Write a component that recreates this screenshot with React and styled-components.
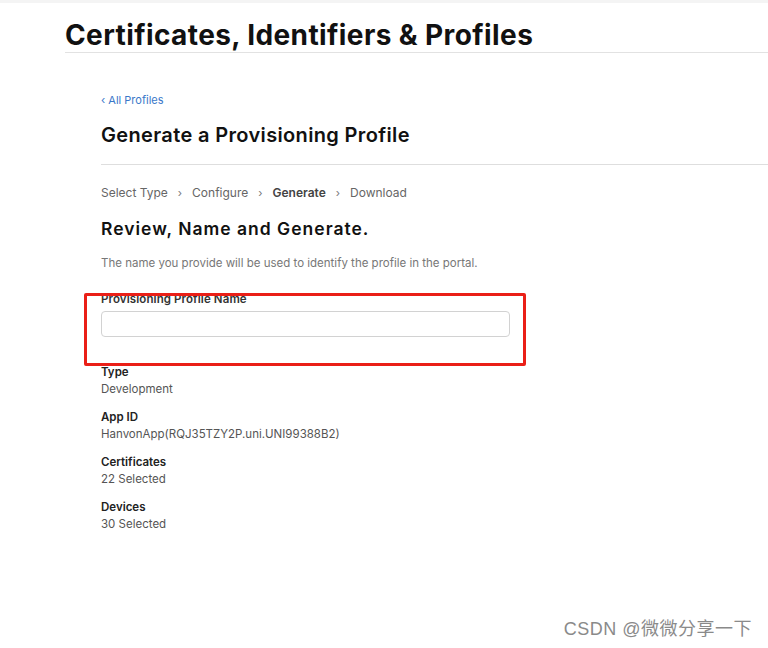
import React from "react";
import styled, { createGlobalStyle } from "styled-components";

const Global = createGlobalStyle`
  html, body { margin: 0; padding: 0; background: #fff; }
  body { font-family: Inter, "Noto Sans", "Liberation Sans", sans-serif; color: #1d1d1f; }
`;

const Page = styled.div`
  position: relative;
  width: 768px;
  height: 648px;
  overflow: hidden;
  background: #fff;
`;

const TopStrip = styled.div`
  height: 3px;
  background: #f4f4f4;
`;

const Header = styled.header`
  margin-left: 65px;
  padding-top: 16px;
  border-bottom: 1px solid #e2e2e2;
`;

const SiteTitle = styled.h1`
  margin: 0;
  font-size: 28px;
  line-height: 32px;
  font-weight: 700;
  letter-spacing: 0.4px;
  color: #111;
  padding-bottom: 1px;
`;

const Main = styled.main`
  margin-left: 101px;
  padding-top: 40px;
`;

const BackLink = styled.a`
  display: block;
  font-size: 11px;
  line-height: 14px;
  color: #3a78c9;
  text-decoration: none;
`;

const PageTitle = styled.h2`
  margin: 15px 0 0;
  font-size: 20px;
  line-height: 26px;
  font-weight: 600;
  letter-spacing: 0.35px;
  color: #111;
  padding-bottom: 16px;
  border-bottom: 1px solid #dedede;
`;

const Steps = styled.nav`
  display: flex;
  align-items: center;
  gap: 10px;
  margin-top: 21px;
  font-size: 12px;
  line-height: 14px;
  color: #666;
`;

const Step = styled.span`
  font-weight: ${(p) => (p.$active ? 600 : 400)};
  color: ${(p) => (p.$active ? "#444" : "#666")};
`;

const Chevron = styled.span`
  font-size: 11px;
  color: #777;
`;

const SectionTitle = styled.h3`
  margin: 18px 0 0;
  font-size: 17.5px;
  line-height: 22px;
  font-weight: 600;
  letter-spacing: 1px;
  color: #111;
`;

const Hint = styled.p`
  margin: 16px 0 0;
  font-size: 11.5px;
  line-height: 14px;
  color: #777;
`;

const FieldLabel = styled.label`
  display: block;
  margin-top: 22px;
  font-size: 11.5px;
  line-height: 14px;
  font-weight: 600;
  letter-spacing: 0.1px;
  color: #333;
`;

const TextInput = styled.input`
  display: block;
  box-sizing: border-box;
  margin-top: 5px;
  width: 409px;
  height: 26px;
  border: 1px solid #d2d2d2;
  border-radius: 4px;
  background: #fff;
  outline: none;
`;

const Details = styled.dl`
  margin: 28px 0 0;
`;

const Term = styled.dt`
  font-size: 11.5px;
  line-height: 15px;
  font-weight: 600;
  color: #222;
  margin-top: ${(p) => (p.$first ? 0 : 13)}px;
`;

const Value = styled.dd`
  margin: 2px 0 0;
  font-size: 11.5px;
  line-height: 15px;
  color: #555;
`;

const Highlight = styled.div`
  position: absolute;
  left: 84px;
  top: 293px;
  width: 436px;
  height: 67px;
  border: 3px solid #ea1f17;
  border-radius: 2px;
`;

const Watermark = styled.div`
  position: absolute;
  right: 16px;
  bottom: 8px;
  font-family: "Liberation Sans", "Noto Sans CJK SC", sans-serif;
  font-size: 18px;
  letter-spacing: 0.5px;
  color: #8a8a8a;
  text-shadow: 0 0 1px #fff;
`;

const details = [
  ["Type", "Development"],
  ["App ID", "HanvonApp(RQJ35TZY2P.uni.UNI99388B2)"],
  ["Certificates", "22 Selected"],
  ["Devices", "30 Selected"],
];

export default function App() {
  return (
    <Page>
      <Global />
      <TopStrip />
      <Header>
        <SiteTitle>Certificates, Identifiers &amp; Profiles</SiteTitle>
      </Header>
      <Main>
        <BackLink href="#">‹ All Profiles</BackLink>
        <PageTitle>Generate a Provisioning Profile</PageTitle>
        <Steps>
          <Step>Select Type</Step>
          <Chevron>›</Chevron>
          <Step>Configure</Step>
          <Chevron>›</Chevron>
          <Step $active>Generate</Step>
          <Chevron>›</Chevron>
          <Step>Download</Step>
        </Steps>
        <SectionTitle>Review, Name and Generate.</SectionTitle>
        <Hint>The name you provide will be used to identify the profile in the portal.</Hint>
        <FieldLabel>Provisioning Profile Name</FieldLabel>
        <TextInput type="text" />
        <Details>
          {details.map(([k, v], i) => (
            <React.Fragment key={k}>
              <Term $first={i === 0}>{k}</Term>
              <Value>{v}</Value>
            </React.Fragment>
          ))}
        </Details>
      </Main>
      <Highlight />
      <Watermark>CSDN @微微分享一下</Watermark>
    </Page>
  );
}
